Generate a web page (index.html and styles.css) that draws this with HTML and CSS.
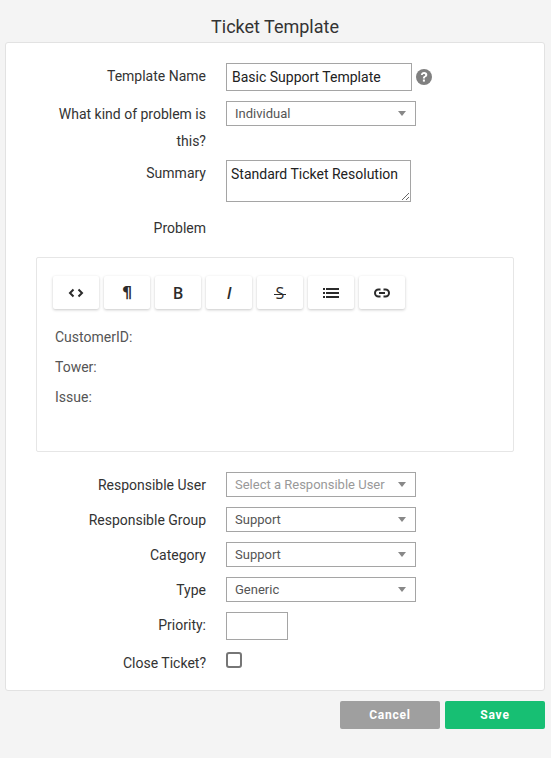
FILE: index.html
```html
<!DOCTYPE html>
<html lang="en">
<head>
	<meta charset="UTF-8">
	<title>Ticket Template</title>
	<link rel="stylesheet" href="styles.css">
</head>
<body>
	<h1 class="page-title">Ticket Template</h1>
	<form class="card">
		<div class="row row-name">
			<label class="row-label">Template Name</label>
			<input class="text-input name-input" type="text" value="Basic Support Template">
			<svg class="help-icon" width="16" height="16" viewBox="0 0 16 16">
				<circle cx="8" cy="8" r="8" fill="#808080"/>
				<path d="M4.900 6C5.100 4.200 6.400 3.100 8.100 3.100c1.900 0 3.200 1.100 3.200 2.700 0 1.200-.7 1.800-1.500 2.300-.7.4-.9.7-.9 1.500H6.900c0-1.300.4-2 1.300-2.500.7-.4 1-.7 1-1.200 0-.6-.5-1-1.200-1-.8 0-1.200.4-1.300 1.100z" fill="#fff"/>
				<rect x="6.900" y="10.500" width="2" height="2.100" fill="#fff"/>
			</svg>
		</div>
		<div class="row row-kind">
			<label class="row-label">What kind of problem is this?</label>
			<div class="select-wrap">
				<select class="select-input"><option>Individual</option></select>
			</div>
		</div>
		<div class="row row-summary">
			<label class="row-label">Summary</label>
			<textarea class="summary-input">Standard Ticket Resolution</textarea>
		</div>
		<div class="row row-problem">
			<label class="row-label">Problem</label>
		</div>

		<div class="editor">
			<div class="toolbar">
				<button type="button" class="tool">
					<svg width="16" height="12" viewBox="0 0 16 12" fill="none" stroke="#2b2b2b" stroke-width="2"><path d="M5.500 2.500 2 6l3.500 3.500M10.500 2.500 14 6l-3.500 3.500"/></svg>
				</button>
				<button type="button" class="tool tool-text tool-para">¶</button>
				<button type="button" class="tool tool-text">B</button>
				<button type="button" class="tool tool-text tool-italic">I</button>
				<button type="button" class="tool tool-text tool-strike">S</button>
				<button type="button" class="tool">
					<svg width="16" height="12" viewBox="0 0 16 12" fill="#2b2b2b"><rect x="0" y="1" width="2" height="2"/><rect x="3" y="1" width="13" height="2"/><rect x="0" y="5" width="2" height="2"/><rect x="3" y="5" width="13" height="2"/><rect x="0" y="9" width="2" height="2"/><rect x="3" y="9" width="13" height="2"/></svg>
				</button>
				<button type="button" class="tool">
					<svg width="16" height="10" viewBox="0 0 16 10" fill="none" stroke="#2b2b2b" stroke-width="2"><path d="M6.500 1.500H4.500a3.500 3.500 0 0 0 0 7h2M9.500 1.500h2a3.500 3.500 0 0 1 0 7h-2M5 5h6"/></svg>
				</button>
			</div>
			<div class="editor-body">
				<p>CustomerID:</p>
				<p>Tower:</p>
				<p>Issue:</p>
			</div>
		</div>

		<div class="row row-select">
			<label class="row-label">Responsible User</label>
			<div class="select-wrap">
				<select class="select-input select-placeholder"><option>Select a Responsible User</option></select>
			</div>
		</div>
		<div class="row row-select">
			<label class="row-label">Responsible Group</label>
			<div class="select-wrap">
				<select class="select-input"><option>Support</option></select>
			</div>
		</div>
		<div class="row row-select">
			<label class="row-label">Category</label>
			<div class="select-wrap">
				<select class="select-input"><option>Support</option></select>
			</div>
		</div>
		<div class="row row-select">
			<label class="row-label">Type</label>
			<div class="select-wrap">
				<select class="select-input"><option>Generic</option></select>
			</div>
		</div>
		<div class="row row-priority">
			<label class="row-label">Priority:</label>
			<input class="text-input priority-input" type="text">
		</div>
		<div class="row row-close">
			<label class="row-label">Close Ticket?</label>
			<input class="check-input" type="checkbox">
		</div>
	</form>
	<div class="actions">
		<button type="button" class="btn btn-cancel">Cancel</button>
		<button type="button" class="btn btn-save">Save</button>
	</div>
</body>
</html>
```

FILE: styles.css
```css
* {
	box-sizing: border-box;
}
body {
	margin: 0;
	padding: 0 6px 0 5px;
	background: #f4f4f4;
	font-family: Roboto, sans-serif;
	font-size: 14px;
	color: #333;
}
.page-title {
	margin: 0;
	padding-top: 16px;
	height: 42px;
	font-size: 18px;
	font-weight: 400;
	line-height: 22px;
	text-align: center;
	color: #333;
}
.card {
	height: 649px;
	padding-top: 20px;
	background: #fff;
	border: 1px solid #e2e2e2;
	border-radius: 3px;
}
.row {
	display: flex;
	align-items: flex-start;
	gap: 20px;
}
.row-label {
	flex: none;
	width: 200px;
	text-align: right;
	line-height: 27px;
	color: #333;
}
.text-input,
.summary-input {
	border: 1px solid #a5a5a5;
	border-radius: 0;
	outline: none;
	font-family: Roboto, sans-serif;
	font-size: 14px;
	color: #222;
}
.text-input {
	height: 28px;
	padding: 0 5px;
}
.name-input {
	width: 186px;
}
.help-icon {
	margin: 6px 0 0 -16px;
}
.row-kind {
	margin-top: 10px;
}
.row-kind .row-label {
	padding-left: 40px;
}
.row-summary {
	margin-top: 5px;
}
.summary-input {
	display: block;
	width: 185px;
	height: 42px;
	padding: 4px;
	line-height: 18px;
}
.row-problem {
	margin-top: 12px;
}
.row-problem .row-label {
	padding-top: 1px;
	height: 27px;
}
.select-wrap {
	position: relative;
	width: 190px;
}
.select-wrap::after {
	content: "";
	position: absolute;
	right: 10px;
	top: 10px;
	border-left: 4px solid transparent;
	border-right: 4px solid transparent;
	border-top: 5px solid #888;
}
.select-input {
	display: block;
	width: 100%;
	height: 25px;
	padding: 0 8px;
	appearance: none;
	background: #fff;
	border: 1px solid #a5a5a5;
	border-radius: 0;
	font-family: Roboto, sans-serif;
	font-size: 13px;
	color: #555;
}
.select-placeholder {
	color: #999;
}
.editor {
	width: 478px;
	height: 195px;
	margin: 16px 0 20px 30px;
	padding: 18px 16px 0;
	border: 1px solid #e6e6e6;
	border-radius: 2px;
}
.toolbar {
	display: flex;
	gap: 5px;
}
.tool {
	display: flex;
	align-items: center;
	justify-content: center;
	width: 46px;
	height: 33px;
	padding: 0;
	background: #fff;
	border: 0;
	border-radius: 2px;
	box-shadow: 0 1px 3px rgba(0, 0, 0, .22);
	font-family: "Open Sans", sans-serif;
	color: #2b2b2b;
}
.tool-text {
	font-size: 16px;
	font-weight: 600;
}
.tool-para {
	font-family: "DejaVu Sans", sans-serif;
	font-size: 16px;
	font-weight: 700;
}
.tool-italic {
	font-style: italic;
}
.tool-strike {
	position: relative;
	font-weight: 400;
}
.tool-strike::after {
	content: "";
	position: absolute;
	left: 17px;
	right: 17px;
	top: 18px;
	height: 1px;
	background: #2b2b2b;
}
.editor-body {
	padding: 19px 0 0 2px;
	color: #555;
}
.editor-body p {
	margin: 0 0 12px;
	line-height: 18px;
}
.row-select {
	margin-bottom: 10px;
}
.row-select .row-label {
	height: 25px;
	padding-top: 1px;
	line-height: 25px;
}
.row-priority .row-label {
	line-height: 26px;
}
.priority-input {
	width: 62px;
}
.row-close {
	margin-top: 12px;
}
.row-close .row-label {
	line-height: 23px;
}
.check-input {
	width: 16px;
	height: 16px;
	margin: 0;
	appearance: none;
	background: #fff;
	border: 2px solid #767676;
	border-radius: 3px;
}
.actions {
	display: flex;
	justify-content: flex-end;
	gap: 5px;
	margin-top: 10px;
}
.btn {
	width: 100px;
	height: 28px;
	padding: 0;
	border: 0;
	border-radius: 2px;
	font-family: Roboto, sans-serif;
	font-size: 12px;
	font-weight: 700;
	letter-spacing: .8px;
	color: #fff;
}
.btn-cancel {
	background: #9f9f9f;
}
.btn-save {
	background: #17bf73;
}
```
